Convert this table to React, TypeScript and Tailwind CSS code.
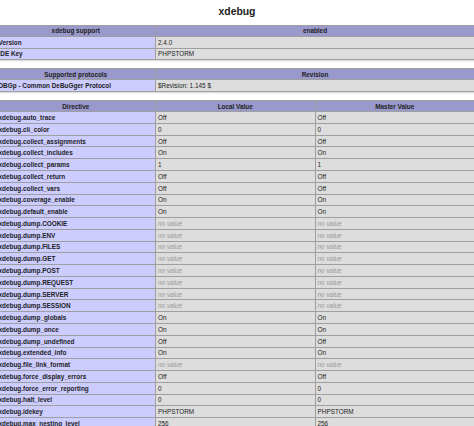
import type { ReactNode } from 'react'

type Row = [string, string, string?]

const infoRows: Row[] = [
  ['Version', '2.4.0'],
  ['IDE Key', 'PHPSTORM'],
]

const protocolRows: Row[] = [['DBGp - Common DeBuGger Protocol', '$Revision: 1.145 $']]

const NV = '__no_value__'

const directives: Row[] = [
  ['xdebug.auto_trace', 'Off', 'Off'],
  ['xdebug.cli_color', '0', '0'],
  ['xdebug.collect_assignments', 'Off', 'Off'],
  ['xdebug.collect_includes', 'On', 'On'],
  ['xdebug.collect_params', '1', '1'],
  ['xdebug.collect_return', 'Off', 'Off'],
  ['xdebug.collect_vars', 'Off', 'Off'],
  ['xdebug.coverage_enable', 'On', 'On'],
  ['xdebug.default_enable', 'On', 'On'],
  ['xdebug.dump.COOKIE', NV, NV],
  ['xdebug.dump.ENV', NV, NV],
  ['xdebug.dump.FILES', NV, NV],
  ['xdebug.dump.GET', NV, NV],
  ['xdebug.dump.POST', NV, NV],
  ['xdebug.dump.REQUEST', NV, NV],
  ['xdebug.dump.SERVER', NV, NV],
  ['xdebug.dump.SESSION', NV, NV],
  ['xdebug.dump_globals', 'On', 'On'],
  ['xdebug.dump_once', 'On', 'On'],
  ['xdebug.dump_undefined', 'Off', 'Off'],
  ['xdebug.extended_info', 'On', 'On'],
  ['xdebug.file_link_format', NV, NV],
  ['xdebug.force_display_errors', 'Off', 'Off'],
  ['xdebug.force_error_reporting', '0', '0'],
  ['xdebug.halt_level', '0', '0'],
  ['xdebug.idekey', 'PHPSTORM', 'PHPSTORM'],
  ['xdebug.max_nesting_level', '256', '256'],
]

function Value({ v }: { v: string }) {
  if (v === NV) return <i className="text-[#999]">no value</i>
  return <>{v}</>
}

function Cell({ children, className = '' }: { children?: ReactNode; className?: string }) {
  return (
    <div className={`flex items-center overflow-hidden whitespace-nowrap border-r border-[#9f9f9f] px-[2px] last:border-r-0 ${className}`}>
      {children}
    </div>
  )
}

function PhpTable({ head, rows }: { head: string[]; rows: Row[] }) {
  const cols = head.length === 3 ? 'grid-cols-[159.5px_159.5px_1fr]' : 'grid-cols-[159.5px_1fr]'
  return (
    <div className="ml-[-3.5px] w-[477.5px] shadow-[0.5px_1px_1.5px_#ccc]">
      <div className={`grid ${cols} h-[11.78px] border-y border-[#9f9f9f] bg-[#9999cc] font-bold`}>
        {head.map((h) => (
          <Cell key={h} className="justify-center">
            {h}
          </Cell>
        ))}
      </div>
      {rows.map((r) => (
        <div key={r[0]} className={`grid ${cols} h-[11.78px] border-b border-[#9f9f9f]`}>
          <Cell className="bg-[#ccccff] font-bold">{r[0]}</Cell>
          <Cell className="bg-[#dddddd]">
            <Value v={r[1]} />
          </Cell>
          {head.length === 3 && (
            <Cell className="bg-[#dddddd]">
              <Value v={r[2] ?? ''} />
            </Cell>
          )}
        </div>
      ))}
    </div>
  )
}

export default function App() {
  return (
    <div className="h-[426px] w-[474px] overflow-hidden bg-white font-['Liberation_Sans',Arial,sans-serif] text-[#222]">
      <h2 className="pt-[5px] text-center text-[10.4px] font-bold leading-[14px]">xdebug</h2>
      <div className="mt-[6px] text-[6.4px] leading-[7px]">
        <PhpTable head={['xdebug support', 'enabled']} rows={infoRows} />
        <div className="mt-[8px]">
          <PhpTable head={['Supported protocols', 'Revision']} rows={protocolRows} />
        </div>
        <div className="mt-[8.6px]">
          <PhpTable head={['Directive', 'Local Value', 'Master Value']} rows={directives} />
        </div>
      </div>
    </div>
  )
}
